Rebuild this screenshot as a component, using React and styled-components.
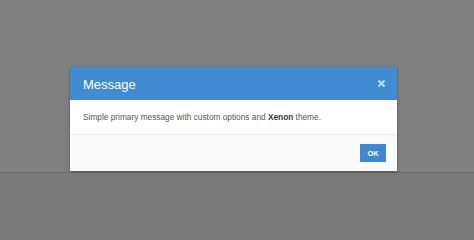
import React from "react";
import styled, { createGlobalStyle } from "styled-components";

const Global = createGlobalStyle`
  html, body { margin: 0; padding: 0; }
  body { font-family: "Liberation Sans", Arial, sans-serif; background: #7a7a7a; }
`;

const Page = styled.div`
  width: 474px;
  height: 237px;
  overflow: hidden;
  display: flex;
  flex-direction: column;
`;

const Stage = styled.div`
  height: 173px;
  box-sizing: border-box;
  padding: 67px 0 0 70px;
  background: #808080;
  border-bottom: 1px solid #696969;
`;

const Lower = styled.div`
  flex: 1;
  background: #7a7a7a;
`;

const Modal = styled.div`
  width: 327px;
  background: #fff;
  box-shadow: 0 1px 3px rgba(0, 0, 0, 0.35);
  display: flex;
  flex-direction: column;
`;

const Header = styled.div`
  height: 33px;
  background: #418bd3;
  display: flex;
  align-items: center;
  justify-content: space-between;
  padding: 0 11px 0 13px;
`;

const Title = styled.div`
  color: #fff;
  font-size: 13px;
  line-height: 1;
  margin-top: 1px;
`;

const Close = styled.span`
  display: flex;
  width: 9px;
  height: 9px;
  opacity: 0.7;
`;

const Body = styled.div`
  height: 34px;
  display: flex;
  align-items: center;
  padding: 0 13px;
  font-size: 8.3px;
  color: #555;
`;

const Strong = styled.b`
  color: #333;
`;

const Footer = styled.div`
  height: 37px;
  box-sizing: border-box;
  border-top: 1px solid #ececec;
  background: #fafafa;
  display: flex;
  justify-content: flex-end;
  align-items: flex-start;
  padding: 9px 11px 0 0;
`;

const Button = styled.button`
  width: 26px;
  height: 18px;
  border: none;
  background: #3f88d1;
  color: #fff;
  font-family: "Liberation Sans", Arial, sans-serif;
  font-weight: bold;
  font-size: 7.5px;
  padding: 0;
`;

export default function App() {
  return (
    <Page>
      <Global />
      <Stage>
        <Modal>
          <Header>
            <Title>Message</Title>
            <Close>
              <svg width="9" height="9" viewBox="0 0 9 9">
                <path d="M1.5 1.5 L7.5 7.5 M7.5 1.5 L1.5 7.5" stroke="#fff" strokeWidth="2" />
              </svg>
            </Close>
          </Header>
          <Body>
            <span>
              Simple primary message with custom options and <Strong>Xenon</Strong> theme.
            </span>
          </Body>
          <Footer>
            <Button>OK</Button>
          </Footer>
        </Modal>
      </Stage>
      <Lower />
    </Page>
  );
}
